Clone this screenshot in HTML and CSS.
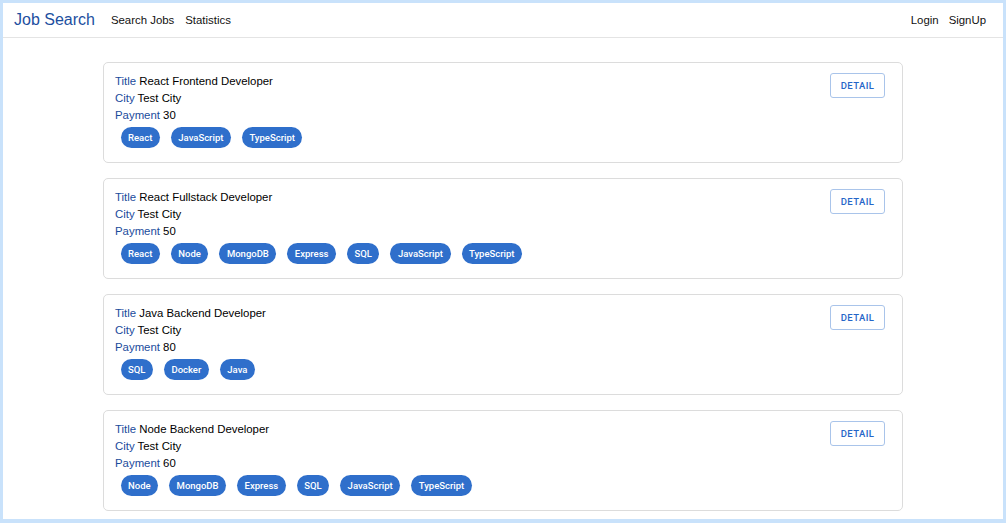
FILE: index.html
```html
<!DOCTYPE html>
<html lang="en">
<head>
    <meta charset="UTF-8">
    <meta name="viewport" content="width=device-width, initial-scale=1.0">
    <title>Job Search</title>
    <link rel="stylesheet" href="styles.css">
</head>
<body>
    <div class="frame">
        <nav class="navbar">
            <div class="nav-left">
                <a class="brand" href="#">Job Search</a>
                <a class="nav-link" href="#">Search Jobs</a>
                <a class="nav-link" href="#">Statistics</a>
            </div>
            <div class="nav-right">
                <a class="nav-link" href="#">Login</a>
                <a class="nav-link" href="#">SignUp</a>
            </div>
        </nav>

        <main class="job-list">
            <div class="job-card">
                <div class="job-info">
                    <div class="job-row"><span class="label">Title</span> React Frontend Developer</div>
                    <div class="job-row"><span class="label">City</span> Test City</div>
                    <div class="job-row"><span class="label">Payment</span> 30</div>
                    <div class="chips">
                        <span class="chip">React</span>
                        <span class="chip">JavaScript</span>
                        <span class="chip">TypeScript</span>
                    </div>
                </div>
                <button class="detail-btn">Detail</button>
            </div>

            <div class="job-card">
                <div class="job-info">
                    <div class="job-row"><span class="label">Title</span> React Fullstack Developer</div>
                    <div class="job-row"><span class="label">City</span> Test City</div>
                    <div class="job-row"><span class="label">Payment</span> 50</div>
                    <div class="chips">
                        <span class="chip">React</span>
                        <span class="chip">Node</span>
                        <span class="chip">MongoDB</span>
                        <span class="chip">Express</span>
                        <span class="chip">SQL</span>
                        <span class="chip">JavaScript</span>
                        <span class="chip">TypeScript</span>
                    </div>
                </div>
                <button class="detail-btn">Detail</button>
            </div>

            <div class="job-card">
                <div class="job-info">
                    <div class="job-row"><span class="label">Title</span> Java Backend Developer</div>
                    <div class="job-row"><span class="label">City</span> Test City</div>
                    <div class="job-row"><span class="label">Payment</span> 80</div>
                    <div class="chips">
                        <span class="chip">SQL</span>
                        <span class="chip">Docker</span>
                        <span class="chip">Java</span>
                    </div>
                </div>
                <button class="detail-btn">Detail</button>
            </div>

            <div class="job-card">
                <div class="job-info">
                    <div class="job-row"><span class="label">Title</span> Node Backend Developer</div>
                    <div class="job-row"><span class="label">City</span> Test City</div>
                    <div class="job-row"><span class="label">Payment</span> 60</div>
                    <div class="chips">
                        <span class="chip">Node</span>
                        <span class="chip">MongoDB</span>
                        <span class="chip">Express</span>
                        <span class="chip">SQL</span>
                        <span class="chip">JavaScript</span>
                        <span class="chip">TypeScript</span>
                    </div>
                </div>
                <button class="detail-btn">Detail</button>
            </div>
        </main>
    </div>
</body>
</html>
```

FILE: styles.css
```css
html, body {
    margin: 0;
    height: 100%;
}

body {
    font-family: 'Liberation Sans', Arial, sans-serif;
    background-color: #c9e2fb;
    box-sizing: border-box;
    padding: 3px 3px 4px 3px;
}

.frame {
    background-color: #fff;
    height: 100%;
    overflow: hidden;
}

.navbar {
    display: flex;
    justify-content: space-between;
    align-items: center;
    height: 35px;
    padding: 0 17px 0 11px;
    border-bottom: 1px solid #e4e4e4;
    box-sizing: border-box;
}

.nav-left,
.nav-right {
    display: flex;
    align-items: center;
    gap: 11px;
}

.nav-right {
    gap: 10px;
}

.brand {
    font-size: 16px;
    color: #1d4fa0;
    text-decoration: none;
    margin-right: 5px;
}

.nav-link {
    font-size: 11.4px;
    color: #111;
    text-decoration: none;
}

.job-list {
    width: 800px;
    margin: 24px auto 0;
    display: flex;
    flex-direction: column;
    gap: 15px;
}

.job-card {
    display: flex;
    justify-content: space-between;
    align-items: flex-start;
    border: 1px solid #dcdcdc;
    border-radius: 5px;
    padding: 10px 17px 14px 11px;
}

.job-row {
    font-size: 11.4px;
    line-height: 17px;
    color: #000;
}

.label {
    color: #1a4b9c;
}

.chips {
    display: flex;
    flex-wrap: wrap;
    margin-top: 3px;
}

.chip {
    font-family: Roboto, 'Liberation Sans', sans-serif;
    font-weight: 500;
    font-size: 9.5px;
    color: #fff;
    background-color: #2f6fcb;
    height: 21px;
    line-height: 21px;
    padding: 0 7.5px;
    margin: 0 5.5px;
    border-radius: 11px;
}

.detail-btn {
    font-family: Roboto, 'Liberation Sans', sans-serif;
    font-weight: 500;
    font-size: 9.5px;
    letter-spacing: 0.4px;
    text-transform: uppercase;
    color: #2566c8;
    background-color: #fff;
    border: 1px solid #a9c4ea;
    border-radius: 3px;
    width: 55px;
    height: 25px;
    padding: 0;
    cursor: pointer;
}
```
